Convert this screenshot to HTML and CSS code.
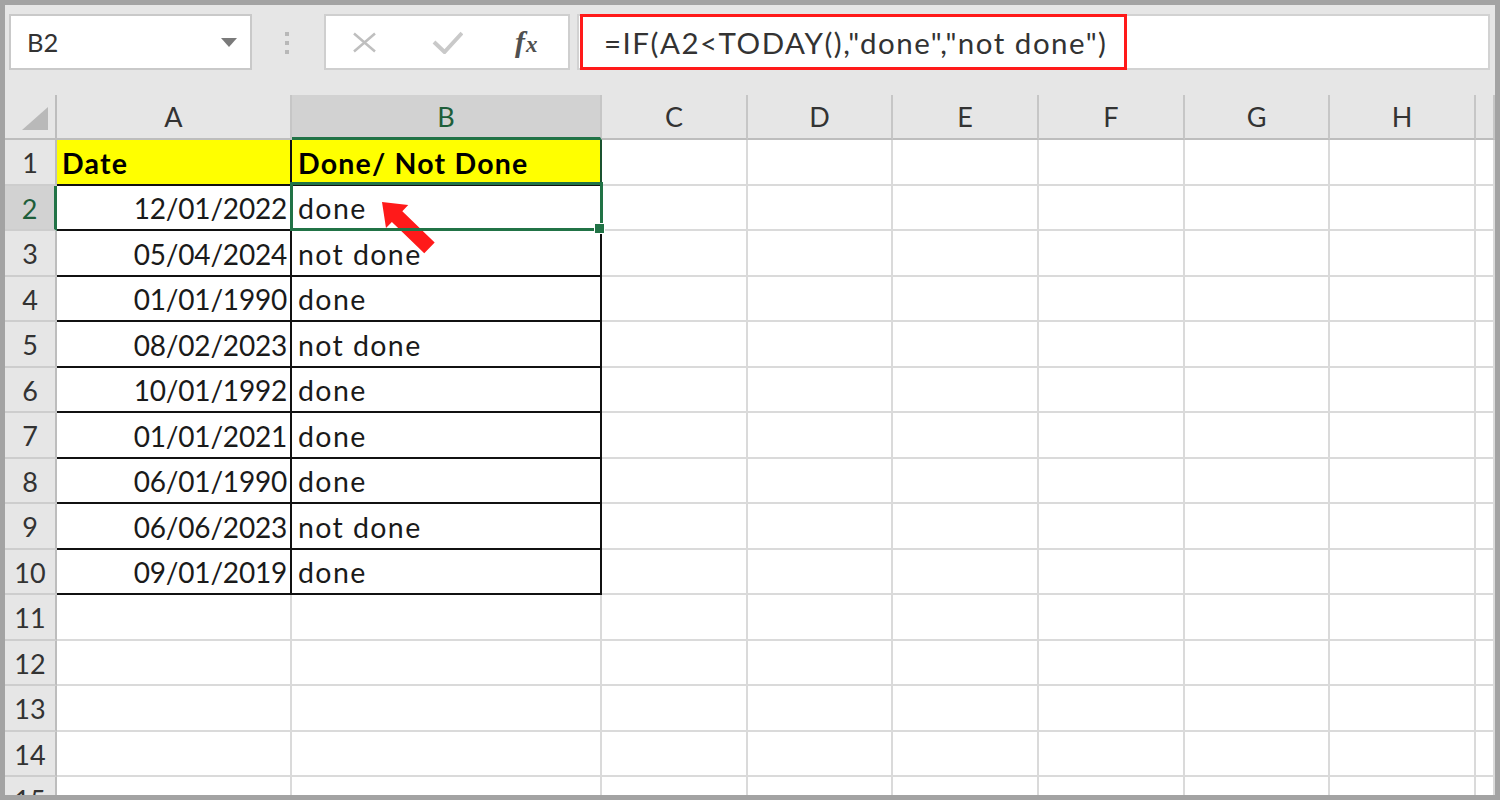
FILE: index.html
```html
<!DOCTYPE html>
<html lang="en">
<head>
  <meta charset="UTF-8" />
  <title>IF TODAY formula</title>
  <link rel="stylesheet" href="styles.css">
</head>
<body>
  <div class="window">
    <div class="toolbar">
      <div class="name-box">
        <span class="name-ref">B2</span>
        <span class="name-drop"></span>
      </div>
      <div class="grip"><i></i><i></i><i></i></div>
      <div class="fx-buttons">
        <svg class="btn-cancel" width="25" height="21" viewBox="0 0 25 21">
          <path d="M2 1.5 L23 19.5 M23 1.5 L2 19.5" />
        </svg>
        <svg class="btn-enter" width="31" height="23" viewBox="0 0 31 23">
          <path d="M2 11 L12.5 21 L30 2" />
        </svg>
        <span class="btn-fx"><i>f</i><i class="fx-x">x</i></span>
      </div>
      <div class="formula-bar">
        <div class="formula-mark">=IF(A2&lt;TODAY(),"done","not done")</div>
      </div>
    </div>

    <div class="sheet">
      <div class="row head">
        <div class="corner"></div>
        <div class="ch">A</div>
        <div class="ch sel">B</div>
        <div class="ch">C</div>
        <div class="ch">D</div>
        <div class="ch">E</div>
        <div class="ch">F</div>
        <div class="ch">G</div>
        <div class="ch">H</div>
        <div class="ch"></div>
      </div>

      <div class="row">
        <div class="rh">1</div>
        <div class="c t hd">Date</div>
        <div class="c t hd b1">Done/ Not Done</div>
        <div class="c"></div><div class="c"></div><div class="c"></div><div class="c"></div><div class="c"></div><div class="c"></div><div class="c"></div>
      </div>
      <div class="row">
        <div class="rh sel">2</div>
        <div class="c t num">12/01/2022</div>
        <div class="c t active">done</div>
        <div class="c"></div><div class="c"></div><div class="c"></div><div class="c"></div><div class="c"></div><div class="c"></div><div class="c"></div>
      </div>
      <div class="row">
        <div class="rh">3</div>
        <div class="c t num">05/04/2024</div>
        <div class="c t">not done</div>
        <div class="c"></div><div class="c"></div><div class="c"></div><div class="c"></div><div class="c"></div><div class="c"></div><div class="c"></div>
      </div>
      <div class="row">
        <div class="rh">4</div>
        <div class="c t num">01/01/1990</div>
        <div class="c t">done</div>
        <div class="c"></div><div class="c"></div><div class="c"></div><div class="c"></div><div class="c"></div><div class="c"></div><div class="c"></div>
      </div>
      <div class="row">
        <div class="rh">5</div>
        <div class="c t num">08/02/2023</div>
        <div class="c t">not done</div>
        <div class="c"></div><div class="c"></div><div class="c"></div><div class="c"></div><div class="c"></div><div class="c"></div><div class="c"></div>
      </div>
      <div class="row">
        <div class="rh">6</div>
        <div class="c t num">10/01/1992</div>
        <div class="c t">done</div>
        <div class="c"></div><div class="c"></div><div class="c"></div><div class="c"></div><div class="c"></div><div class="c"></div><div class="c"></div>
      </div>
      <div class="row">
        <div class="rh">7</div>
        <div class="c t num">01/01/2021</div>
        <div class="c t">done</div>
        <div class="c"></div><div class="c"></div><div class="c"></div><div class="c"></div><div class="c"></div><div class="c"></div><div class="c"></div>
      </div>
      <div class="row">
        <div class="rh">8</div>
        <div class="c t num">06/01/1990</div>
        <div class="c t">done</div>
        <div class="c"></div><div class="c"></div><div class="c"></div><div class="c"></div><div class="c"></div><div class="c"></div><div class="c"></div>
      </div>
      <div class="row">
        <div class="rh">9</div>
        <div class="c t num">06/06/2023</div>
        <div class="c t">not done</div>
        <div class="c"></div><div class="c"></div><div class="c"></div><div class="c"></div><div class="c"></div><div class="c"></div><div class="c"></div>
      </div>
      <div class="row">
        <div class="rh">10</div>
        <div class="c t num">09/01/2019</div>
        <div class="c t">done</div>
        <div class="c"></div><div class="c"></div><div class="c"></div><div class="c"></div><div class="c"></div><div class="c"></div><div class="c"></div>
      </div>
      <div class="row">
        <div class="rh">11</div>
        <div class="c"></div><div class="c"></div><div class="c"></div><div class="c"></div><div class="c"></div><div class="c"></div><div class="c"></div><div class="c"></div><div class="c"></div>
      </div>
      <div class="row">
        <div class="rh">12</div>
        <div class="c"></div><div class="c"></div><div class="c"></div><div class="c"></div><div class="c"></div><div class="c"></div><div class="c"></div><div class="c"></div><div class="c"></div>
      </div>
      <div class="row">
        <div class="rh">13</div>
        <div class="c"></div><div class="c"></div><div class="c"></div><div class="c"></div><div class="c"></div><div class="c"></div><div class="c"></div><div class="c"></div><div class="c"></div>
      </div>
      <div class="row">
        <div class="rh">14</div>
        <div class="c"></div><div class="c"></div><div class="c"></div><div class="c"></div><div class="c"></div><div class="c"></div><div class="c"></div><div class="c"></div><div class="c"></div>
      </div>
      <div class="row">
        <div class="rh">15</div>
        <div class="c"></div><div class="c"></div><div class="c"></div><div class="c"></div><div class="c"></div><div class="c"></div><div class="c"></div><div class="c"></div><div class="c"></div>
      </div>
    </div>
  </div>

  <!-- annotation arrow pointing at B2 -->
  <svg class="pointer" width="75" height="65" viewBox="0 0 75 65">
    <polygon points="0,0 21,-16 21,-7.5 66,-7.5 66,7.5 21,7.5 21,16" transform="translate(12 7) rotate(44)" />
  </svg>
</body>
</html>
```

FILE: styles.css
```css
body {
  margin: 0;
  background: #fff;
  font-family: Lato, "Open Sans", sans-serif;
  color: #222;
}
.window {
  width: 1500px;
  height: 800px;
  box-sizing: border-box;
  border: 5px solid #a3a3a3;
  background: #e6e6e6;
  overflow: hidden;
  display: flex;
  flex-direction: column;
}
.toolbar {
  height: 90px;
  flex: none;
  box-sizing: border-box;
  padding: 9px 5px 0 4px;
  display: flex;
  align-items: flex-start;
}
.name-box {
  width: 243px;
  height: 56px;
  box-sizing: border-box;
  border: 2px solid #c9c9c9;
  background: #fff;
  display: flex;
  align-items: center;
  justify-content: space-between;
  padding: 0 13px 0 16px;
}
.name-ref {
  font-size: 25.5px;
  color: #333;
}
.name-drop {
  width: 0;
  height: 0;
  border-left: 8.5px solid transparent;
  border-right: 8.5px solid transparent;
  border-top: 9px solid #7a7a7a;
}
.grip {
  margin: 18px 0 0 33px;
  display: flex;
  flex-direction: column;
  gap: 5px;
}
.grip i {
  display: block;
  width: 4px;
  height: 4px;
  background: #b8b8b8;
}
.fx-buttons {
  margin-left: 35px;
  width: 246px;
  height: 56px;
  box-sizing: border-box;
  border: 2px solid #cfcfcf;
  background: #fff;
  display: flex;
  align-items: center;
  padding-left: 26px;
}
.btn-cancel path {
  fill: none;
  stroke: #bfbfbf;
  stroke-width: 2.5;
}
.btn-enter {
  margin-left: 55px;
}
.btn-enter path {
  fill: none;
  stroke: #c9c9c9;
  stroke-width: 4;
}
.btn-fx {
  margin-left: 52px;
  font-family: "Liberation Serif", serif;
  font-weight: 700;
  font-size: 30px;
  color: #505050;
  line-height: 1;
}
.btn-fx i {
  font-style: italic;
}
.btn-fx .fx-x {
  font-size: 23px;
  margin-left: 1px;
}
.formula-bar {
  margin-left: 7px;
  flex: 1;
  height: 56px;
  box-sizing: border-box;
  border: 2px solid #d2d2d2;
  background: #fff;
  display: flex;
}
.formula-mark {
  margin: -2px 0 -2px 1px;
  width: 547px;
  height: 56px;
  box-sizing: border-box;
  border: 3px solid #ff1a1a;
  padding-left: 21px;
  display: flex;
  align-items: center;
  font-size: 29.5px;
  letter-spacing: 1.5px;
  color: #333;
  white-space: nowrap;
}

/* grid */
.sheet {
  flex: 1;
  background: #fff;
  overflow: hidden;
}
.row {
  display: grid;
  grid-template-columns: 52px 235px 310px 146px 145px 146px 146px 145px 146px 19px;
  height: 45.5px;
}
.row.head {
  height: 45px;
}
.corner, .ch, .rh, .c {
  box-sizing: border-box;
  display: flex;
  align-items: center;
  white-space: nowrap;
  overflow: hidden;
  line-height: 1;
}
.corner {
  background: #e6e6e6;
  border-right: 2px solid #bdbdbd;
  border-bottom: 2px solid #bdbdbd;
  justify-content: flex-end;
  align-items: flex-end;
  padding: 0 7px 8px 0;
}
.corner::before {
  content: "";
  width: 0;
  height: 0;
  border-left: 26px solid transparent;
  border-bottom: 23px solid #b9b9b9;
}
.ch {
  background: #e6e6e6;
  border-right: 2px solid #c6c6c6;
  border-bottom: 2px solid #bdbdbd;
  justify-content: center;
  font-size: 27px;
  color: #333;
}
.ch.sel {
  background: #d2d2d2;
  border-bottom: 3px solid #217346;
  color: #1e5e3a;
}
.rh {
  background: #e6e6e6;
  border-right: 2px solid #bdbdbd;
  border-bottom: 2px solid #cdcdcd;
  justify-content: center;
  font-size: 27px;
  color: #333;
  padding-top: 2px;
}
.rh.sel {
  background: #d2d2d2;
  border-right: 3px solid #217346;
  color: #1e5e3a;
}
.c {
  border-right: 2px solid #dadada;
  border-bottom: 2px solid #dadada;
  padding: 2px 0 0 6px;
  font-size: 28.5px;
  letter-spacing: 1.4px;
  color: #1a1a1a;
}
.c.t {
  border-right-color: #111;
  border-bottom-color: #111;
}
.c.hd {
  background: #ffff00;
  font-weight: 700;
  color: #000;
  padding-left: 5px;
  letter-spacing: 1.2px;
}
.c.b1 {
  border-right-color: #1a5230;
  padding-left: 6px;
}
.c.num {
  justify-content: flex-end;
  padding: 2px 3px 0 0;
  font-size: 28px;
  letter-spacing: -0.2px;
}
.c.active {
  position: relative;
  overflow: visible;
}
.c.active::after {
  content: "";
  position: absolute;
  left: -2px;
  top: -4px;
  right: -3px;
  bottom: -2px;
  border: 3px solid #217346;
  z-index: 2;
}
.c.active::before {
  content: "";
  position: absolute;
  right: -5px;
  bottom: -5px;
  width: 9px;
  height: 9px;
  background: #217346;
  border: 1px solid #fff;
  z-index: 3;
}
.pointer {
  position: absolute;
  left: 370px;
  top: 195px;
}
.pointer polygon {
  fill: #ff1a1a;
}
```
